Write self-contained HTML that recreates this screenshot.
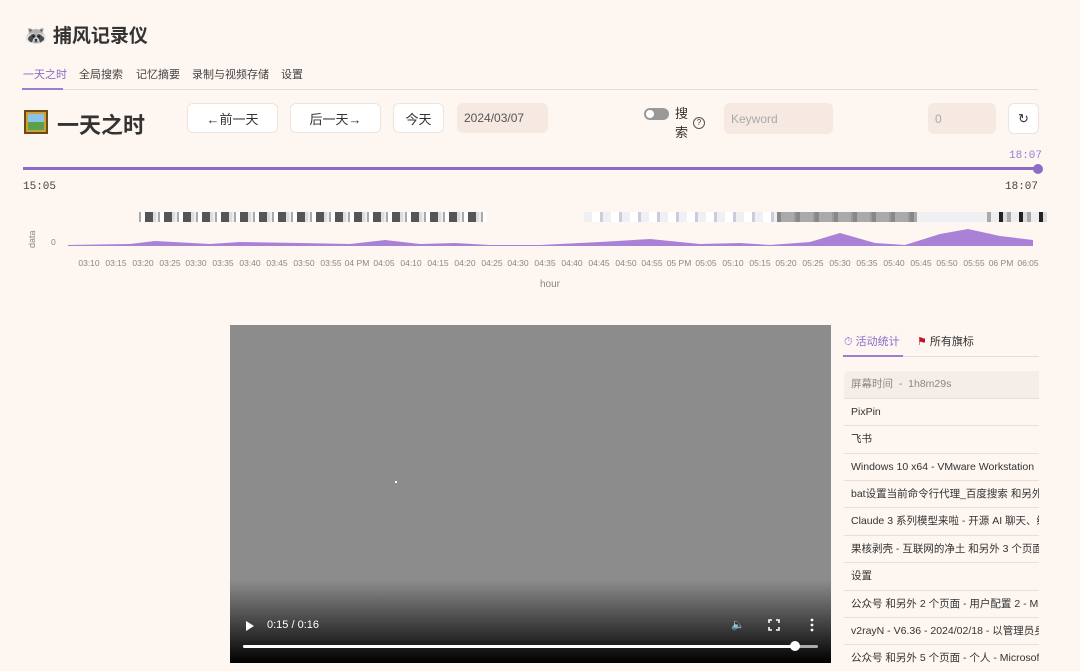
<!DOCTYPE html>
<html><head><meta charset="utf-8"><style>
*{margin:0;padding:0;box-sizing:border-box}
body{width:1080px;height:668px;overflow:hidden;background:#fdf6f1;font-family:"Liberation Sans","Noto Sans CJK SC",sans-serif;color:#333;position:relative}
.a{position:absolute}
.btn{position:absolute;background:#fff;border:1px solid #eee4de;border-radius:6px;font-size:13px;display:flex;align-items:center;justify-content:center;color:#333}
.inp{position:absolute;background:#f5e9e2;border-radius:6px;font-size:12px;color:#aaa;display:flex;align-items:center;padding-left:7px}
.mono{font-family:"Liberation Mono",monospace;font-size:11px}
.xl{position:absolute;top:258px;font-size:8.5px;color:#888;width:30px;text-align:center;margin-left:-15px}
.row{position:absolute;left:844px;width:195px;height:27px;border-top:1px solid #eadfd8;font-size:10.5px;padding-left:7px;line-height:27px;white-space:nowrap;overflow:hidden;color:#333;background:#fdf6f1}
</style></head><body>
<div class="a" style="left:24px;top:21px;font-size:19px;font-weight:bold;color:#333">🦝 捕风记录仪</div>
<div class="a" style="left:23px;top:66px;font-size:11px;color:#8b6cc7">一天之时</div>
<div class="a" style="left:79px;top:66px;font-size:11px;color:#444">全局搜索</div>
<div class="a" style="left:136px;top:66px;font-size:11px;color:#444">记忆摘要</div>
<div class="a" style="left:192px;top:66px;font-size:11px;color:#444">录制与视频存储</div>
<div class="a" style="left:281px;top:66px;font-size:11px;color:#444">设置</div>
<div class="a" style="left:22px;top:89px;width:1016px;height:1px;background:#e6dcd6"></div>
<div class="a" style="left:22px;top:88px;width:41px;height:2px;background:#9a7fd0"></div>

<div class="a" style="left:24px;top:110px;width:24px;height:24px;background:#c9a23a;border:2px solid #6b4a1a"><div style="margin:2px;width:16px;height:16px;background:linear-gradient(#8cc1e8 50%,#5aa14a 50%)"></div></div>
<div class="a" style="left:57px;top:108px;font-size:22px;font-weight:bold;color:#333">一天之时</div>
<div class="btn" style="left:187px;top:103px;width:91px;height:30px">←前一天</div>
<div class="btn" style="left:290px;top:103px;width:91px;height:30px">后一天→</div>
<div class="btn" style="left:393px;top:103px;width:51px;height:30px">今天</div>
<div class="inp" style="left:457px;top:103px;width:91px;height:30px;color:#555">2024/03/07</div>
<div class="a" style="left:644px;top:108px;width:25px;height:12px;border-radius:6px;background:#999"><div style="margin:2px;width:8px;height:8px;border-radius:50%;background:#fff"></div></div>
<div class="a" style="left:675px;top:104px;font-size:13px;line-height:19px;width:14px">搜索</div>
<div class="a" style="left:693px;top:117px;width:12px;height:12px;border:1px solid #555;border-radius:50%;font-size:8px;text-align:center;line-height:10px">?</div>
<div class="inp" style="left:724px;top:103px;width:109px;height:31px">Keyword</div>
<div class="inp" style="left:928px;top:103px;width:68px;height:31px">0</div>
<div class="btn" style="left:1008px;top:103px;width:31px;height:31px;font-size:13px">↻</div>

<div class="a mono" style="left:1009px;top:150px;color:#9a7fd0">18:07</div>
<div class="a" style="left:23px;top:167px;width:1015px;height:3px;background:#8b6cc7"></div>
<div class="a" style="left:1033px;top:164px;width:10px;height:10px;border-radius:50%;background:#8b6cc7"></div>
<div class="a mono" style="left:23px;top:181px;color:#444">15:05</div>
<div class="a mono" style="left:1005px;top:181px;color:#444">18:07</div>

<div class="a" style="left:139px;top:212px;width:348px;height:10px;background:repeating-linear-gradient(90deg,#aaa 0 2px,#fff 2px 6px,#555 6px 14px,#ddd 14px 17px,#eee 17px 19px)"></div>
<div class="a" style="left:584px;top:212px;width:193px;height:10px;background:repeating-linear-gradient(90deg,#eef0f4 0 8px,#fff 8px 16px,#ccd 16px 19px)"></div>
<div class="a" style="left:777px;top:212px;width:140px;height:10px;background:repeating-linear-gradient(90deg,#888 0 4px,#aaa 4px 17px,#999 17px 19px)"></div>
<div class="a" style="left:917px;top:212px;width:70px;height:10px;background:#eef0f4"></div>
<div class="a" style="left:987px;top:212px;width:60px;height:10px;background:repeating-linear-gradient(90deg,#aaa 0 4px,#eee 4px 12px,#222 12px 16px,#ddd 16px 20px)"></div>

<div class="a" style="left:27px;top:248px;font-size:9px;color:#888;transform:rotate(-90deg);transform-origin:left top">data</div>
<div class="a" style="left:51px;top:237px;font-size:8.5px;color:#888">0</div>
<svg class="a" style="left:0;top:0" width="1080" height="300">
<path d="M68 245 L130 244 L155 241 L210 244 L240 242 L300 243 L350 244 L385 240 L420 244 L455 243 L490 245 L540 245 L600 242 L650 239 L700 244 L740 243 L770 245 L810 242 L840 233 L875 243 L905 245 L940 234 L968 229 L1000 236 L1033 240 L1033 246 L68 246Z" fill="#a981d6"/>
</svg>
<div class="xl" style="left:89px">03:10</div><div class="xl" style="left:116px">03:15</div><div class="xl" style="left:143px">03:20</div><div class="xl" style="left:170px">03:25</div><div class="xl" style="left:196px">03:30</div><div class="xl" style="left:223px">03:35</div><div class="xl" style="left:250px">03:40</div><div class="xl" style="left:277px">03:45</div><div class="xl" style="left:304px">03:50</div><div class="xl" style="left:331px">03:55</div><div class="xl" style="left:357px">04 PM</div><div class="xl" style="left:384px">04:05</div><div class="xl" style="left:411px">04:10</div><div class="xl" style="left:438px">04:15</div><div class="xl" style="left:465px">04:20</div><div class="xl" style="left:492px">04:25</div><div class="xl" style="left:518px">04:30</div><div class="xl" style="left:545px">04:35</div><div class="xl" style="left:572px">04:40</div><div class="xl" style="left:599px">04:45</div><div class="xl" style="left:626px">04:50</div><div class="xl" style="left:652px">04:55</div><div class="xl" style="left:679px">05 PM</div><div class="xl" style="left:706px">05:05</div><div class="xl" style="left:733px">05:10</div><div class="xl" style="left:760px">05:15</div><div class="xl" style="left:786px">05:20</div><div class="xl" style="left:813px">05:25</div><div class="xl" style="left:840px">05:30</div><div class="xl" style="left:867px">05:35</div><div class="xl" style="left:894px">05:40</div><div class="xl" style="left:921px">05:45</div><div class="xl" style="left:947px">05:50</div><div class="xl" style="left:974px">05:55</div><div class="xl" style="left:1001px">06 PM</div><div class="xl" style="left:1028px">06:05</div>
<div class="a" style="left:540px;top:279px;font-size:10px;color:#888">hour</div>

<div class="a" style="left:230px;top:325px;width:601px;height:338px;background:linear-gradient(#8c8c8c 0,#8c8c8c 255px,#000 338px)"></div>
<div class="a" style="left:395px;top:481px;width:2px;height:2px;background:#fff"></div>
<svg class="a" style="left:245px;top:620px" width="10" height="12"><path d="M1 1L9 6L1 11Z" fill="#fff"/></svg>
<div class="a" style="left:267px;top:619px;font-size:11px;color:#fff">0:15 / 0:16</div>
<div class="a" style="left:731px;top:618px;font-size:11px;color:#777">🔈</div>
<svg class="a" style="left:768px;top:619px" width="12" height="12"><path d="M1 4V1H4M8 1H11V4M11 8V11H8M4 11H1V8" stroke="#fff" stroke-width="1.6" fill="none"/></svg>
<svg class="a" style="left:810px;top:618px" width="4" height="14"><circle cx="2" cy="2" r="1.4" fill="#fff"/><circle cx="2" cy="7" r="1.4" fill="#fff"/><circle cx="2" cy="12" r="1.4" fill="#fff"/></svg>
<div class="a" style="left:243px;top:645px;width:575px;height:3px;background:#aaa;border-radius:2px"></div>
<div class="a" style="left:243px;top:645px;width:552px;height:3px;background:#fff;border-radius:2px"></div>
<div class="a" style="left:790px;top:641px;width:10px;height:10px;border-radius:50%;background:#fff"></div>

<div class="a" style="left:844px;top:333px;font-size:11px;color:#8b6cc7">⏱ 活动统计</div>
<div class="a" style="left:917px;top:333px;font-size:11px;color:#333"><span style="color:#c0142c">⚑</span> 所有旗标</div>
<div class="a" style="left:843px;top:356px;width:196px;height:1px;background:#e6dcd6"></div>
<div class="a" style="left:843px;top:355px;width:60px;height:2px;background:#9a7fd0"></div>
<div class="row" style="top:371px;background:#f5ede8;border-top:none;border-radius:6px 0 0 0;color:#888">屏幕时间 &nbsp;- &nbsp;1h8m29s</div>
<div class="row" style="top:398px">PixPin</div>
<div class="row" style="top:425px">飞书</div>
<div class="row" style="top:453px">Windows 10 x64 - VMware Workstation</div>
<div class="row" style="top:480px">bat设置当前命令行代理_百度搜索 和另外</div>
<div class="row" style="top:507px">Claude 3 系列模型来啦 - 开源 AI 聊天、绘</div>
<div class="row" style="top:535px">果核剥壳 - 互联网的净土 和另外 3 个页面</div>
<div class="row" style="top:562px">设置</div>
<div class="row" style="top:590px">公众号 和另外 2 个页面 - 用户配置 2 - Mi</div>
<div class="row" style="top:617px">v2rayN - V6.36 - 2024/02/18 - 以管理员身份</div>
<div class="row" style="top:644px">公众号 和另外 5 个页面 - 个人 - Microsoft</div>
</body></html>
